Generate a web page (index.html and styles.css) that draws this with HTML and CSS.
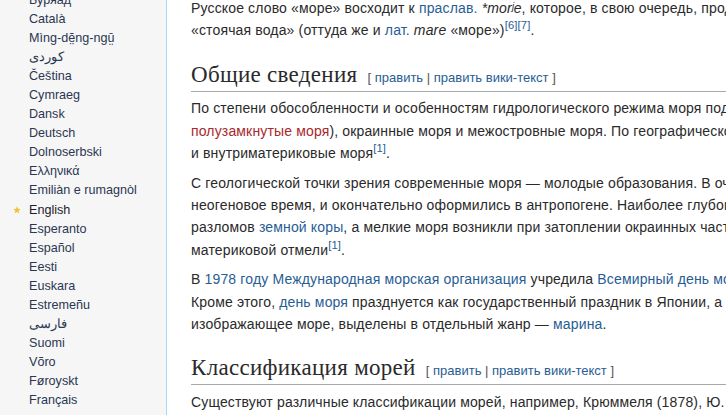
FILE: index.html
```html
<!DOCTYPE html>
<html lang="ru">
<head>
    <meta charset="UTF-8">
    <title>Море — Википедия</title>
    <link rel="stylesheet" href="styles.css">
</head>
<body>
<div class="page">

    <div class="sidebar">
        <ul class="langs">
            <li><a href="#">Буряад</a></li>
            <li><a href="#">Català</a></li>
            <li><a href="#">Mìng-dĕ̤ng-ngṳ̄</a></li>
            <li><a href="#" lang="ckb">کوردی</a></li>
            <li><a href="#">Čeština</a></li>
            <li><a href="#">Cymraeg</a></li>
            <li><a href="#">Dansk</a></li>
            <li><a href="#">Deutsch</a></li>
            <li><a href="#">Dolnoserbski</a></li>
            <li><a href="#">Ελληνικά</a></li>
            <li><a href="#">Emiliàn e rumagnòl</a></li>
            <li class="featured">
                <svg class="star" viewBox="0 0 10 10"><path d="M5 0.4 L6.3 3.4 L9.6 3.7 L7.1 5.9 L7.9 9.2 L5 7.5 L2.1 9.2 L2.9 5.9 L0.4 3.7 L3.7 3.4 Z" fill="#f2c13e"/></svg>
                <a href="#" class="dark">English</a>
            </li>
            <li><a href="#">Esperanto</a></li>
            <li><a href="#">Español</a></li>
            <li><a href="#">Eesti</a></li>
            <li><a href="#">Euskara</a></li>
            <li><a href="#">Estremeñu</a></li>
            <li><a href="#" lang="fa">فارسی</a></li>
            <li><a href="#">Suomi</a></li>
            <li><a href="#">Võro</a></li>
            <li><a href="#">Føroyskt</a></li>
            <li><a href="#">Français</a></li>
        </ul>
    </div>

    <div class="content">
        <p>Русское слово «море» восходит к <a href="#">праслав.</a> <i>*morʲe</i>, которое, в свою очередь, продолжает пра-и.-е. <i>*mori</i> «море, озеро»<br>
        «стоячая вода» (оттуда же и <a href="#">лат.</a> <i>mare</i> «море»)<sup><a href="#">[6]</a><a href="#">[7]</a></sup>.</p>

        <h2>Общие сведения <span class="edit">[ <a href="#">править</a> | <a href="#">править вики-текст</a> ]</span></h2>

        <p>По степени обособленности и особенностям гидрологического режима моря подразделяются на внутренние (средиземные и<br>
        <a href="#" class="new">полузамкнутые моря</a>), окраинные моря и межостровные моря. По географическому положению выделяют межматериковые<br>
        и внутриматериковые моря<sup><a href="#">[1]</a></sup>.</p>

        <p>С геологической точки зрения современные моря — молодые образования. В очертаниях, близких к современным, они сложились в<br>
        неогеновое время, и окончательно оформились в антропогене. Наиболее глубокие моря образовались в местах крупных<br>
        разломов <a href="#">земной коры</a>, а мелкие моря возникли при затоплении окраинных частей материков и располагаются в пределах<br>
        материковой отмели<sup><a href="#">[1]</a></sup>.</p>

        <p>В <a href="#">1978 году</a> <a href="#">Международная морская организация</a> учредила <a href="#">Всемирный день моря</a>, который отмечается<br>
        Кроме этого, <a href="#">день моря</a> празднуется как государственный праздник в Японии, а произведения изобразительного искусства,<br>
        изображающее море, выделены в отдельный жанр — <a href="#">марина</a>.</p>

        <h2>Классификация морей <span class="edit">[ <a href="#">править</a> | <a href="#">править вики-текст</a> ]</span></h2>

        <p>Существуют различные классификации морей, например, Крюммеля (1878), Ю. М. Шокальского (1917), Н. Н. Зубова<br>
        А. М. Муромцева и других морей<sup><a href="#">[1]</a></sup>.</p>
    </div>

</div>
</body>
</html>
```

FILE: styles.css
```css
body {
    margin: 0;
    font-family: "Liberation Sans", Arial, sans-serif;
    color: #2a2a2a;
    background: #fff;
    overflow: hidden;
}
a {
    color: #285d93;
    text-decoration: none;
}
a.new {
    color: #a8282c;
}
.page {
    display: flex;
    min-height: 100vh;
}
.sidebar {
    width: 166px;
    flex: none;
    background: #f6f6f6;
    border-right: 1px solid #a7d7f9;
}
.langs {
    list-style: none;
    margin: -9px 0 0;
    padding: 0 0 0 29px;
    font-size: 12.6px;
    line-height: 19px;
}
.langs a {
    color: #2b3752;
}
.langs a.dark {
    color: #1c1c2c;
}
.langs .featured {
    position: relative;
    margin-top: 1px;
}
.star {
    position: absolute;
    left: -16px;
    top: 5px;
    width: 8px;
    height: 8px;
}
.content {
    flex: 1;
    min-width: 0;
    padding-left: 24px;
    font-size: 14px;
    letter-spacing: 0.15px;
    line-height: 22.4px;
}
.content p {
    margin: 5.6px 0 7px;
    white-space: nowrap;
}
.content p:first-child {
    margin-top: -3px;
}
sup {
    font-size: 80%;
    line-height: 0;
}
h2 {
    font-family: "Liberation Serif", "Times New Roman", serif;
    font-weight: normal;
    font-size: 23px;
    letter-spacing: 0.3px;
    line-height: 26px;
    margin: 20px 0 0;
    padding: 0;
    border-bottom: 1px solid #aaa;
    white-space: nowrap;
}
.edit {
    font-family: "Liberation Sans", Arial, sans-serif;
    font-size: 13px;
    letter-spacing: 0;
    margin-left: 4px;
    color: #555;
}
```
